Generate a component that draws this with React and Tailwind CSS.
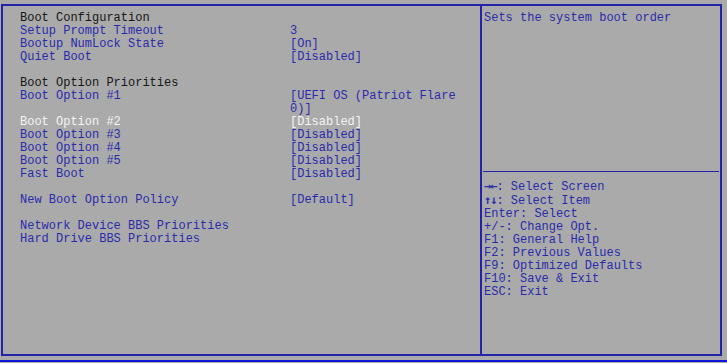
import React from 'react';

const rows = [
  { label: 'Boot Configuration', kind: 'head' },
  { label: 'Setup Prompt Timeout', value: '3' },
  { label: 'Bootup NumLock State', value: '[On]' },
  { label: 'Quiet Boot', value: '[Disabled]' },
  { kind: 'gap' },
  { label: 'Boot Option Priorities', kind: 'head' },
  { label: 'Boot Option #1', value: '[UEFI OS (Patriot Flare 0)]' },
  { label: 'Boot Option #2', value: '[Disabled]', active: true },
  { label: 'Boot Option #3', value: '[Disabled]' },
  { label: 'Boot Option #4', value: '[Disabled]' },
  { label: 'Boot Option #5', value: '[Disabled]' },
  { label: 'Fast Boot', value: '[Disabled]' },
  { kind: 'gap' },
  { label: 'New Boot Option Policy', value: '[Default]' },
  { kind: 'gap' },
  { label: 'Network Device BBS Priorities' },
  { label: 'Hard Drive BBS Priorities' },
];

// keys drawn as arrows get their own font so the glyphs are not tiny
const help = [
  { key: '→←', text: ': Select Screen', arrow: true },
  { key: '↑↓', text: ': Select Item', arrow: true },
  { key: 'Enter', text: ': Select' },
  { key: '+/-', text: ': Change Opt.' },
  { key: 'F1', text: ': General Help' },
  { key: 'F2', text: ': Previous Values' },
  { key: 'F9', text: ': Optimized Defaults' },
  { key: 'F10', text: ': Save & Exit' },
  { key: 'ESC', text: ': Exit' },
];

export default function App() {
  return (
    <div className="w-[727px] h-[363px] bg-[#aaaaaa] relative overflow-hidden font-['Liberation_Mono','DejaVu_Sans_Mono',monospace] text-[12px] leading-[13px] text-[#2a2aac]">
      <div className="absolute left-[1px] top-[4px] w-[721px] h-[352px] flex border-2 border-[#2323a8]">
        {/* settings list */}
        <div className="flex-1 pl-[17px] pt-[6px]">
          {rows.map((r, i) => {
            if (r.kind === 'gap') return <div key={i} className="h-[13px]" />;
            if (r.kind === 'head')
              return (
                <div key={i} className="text-[#161616] whitespace-pre">
                  {r.label}
                </div>
              );
            return (
              <div key={i} className={`flex ${r.active ? 'text-[#f4f4f4]' : ''}`}>
                <span className="w-[270px] shrink-0 whitespace-pre">{r.label}</span>
                {r.value && <span className="w-[172px]">{r.value}</span>}
              </div>
            );
          })}
        </div>

        {/* help panel */}
        <div className="w-[240px] border-l-2 border-[#2323a8] flex flex-col">
          <div className="h-[165px] pl-[2px] pt-[6px]">Sets the system boot order</div>
          <div className="mx-[1px] border-t border-[#2323a8]" />
          <div className="pl-[2px] pt-[8px]">
            {help.map((h) => (
              <div key={h.key} className="whitespace-pre">
                <span className={h.arrow ? "font-['DejaVu_Sans_Mono',monospace] font-bold tracking-[-1px]" : ''}>
                  {h.key}
                </span>
                {h.text}
              </div>
            ))}
          </div>
        </div>
      </div>
      <div className="absolute left-0 right-0 top-[360px] h-[3px] border-t-2 border-[#1414d8]" />
    </div>
  );
}
